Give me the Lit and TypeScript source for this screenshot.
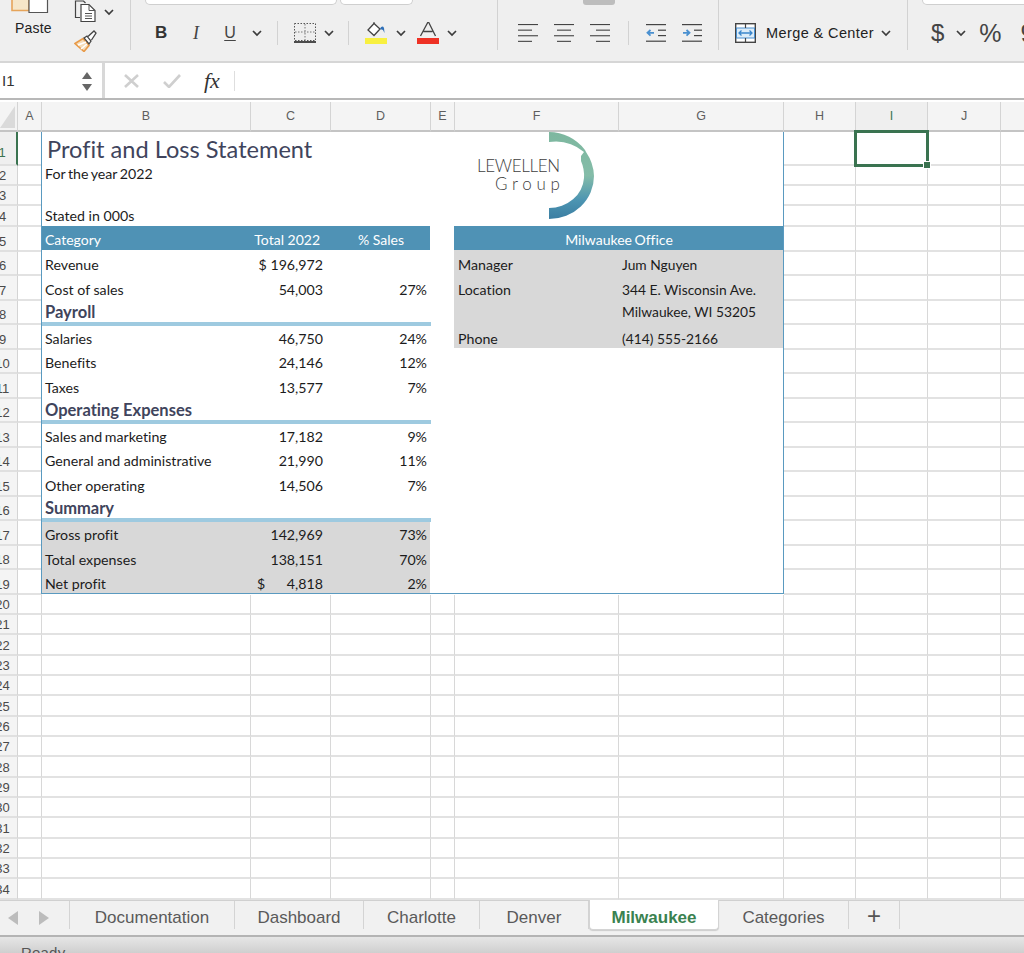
import { LitElement, html, css, svg } from "lit";
import { customElement } from "lit/decorators.js";

const COLS = ["A", "B", "C", "D", "E", "F", "G", "H", "I", "J", "K"];
const ROW_COUNT = 34;
const rowHeight = (n: number) => (n === 1 ? 34 : n === 4 ? 21 : n < 4 ? 20 : n <= 19 ? 24.53 : 20.33);

type Cell = { c: number; r: number; t: string; k?: string; span?: number };

const money = (r: number, n: string, p: string, sym = false): Cell[] => [
  { c: 2, r, t: n, k: sym ? "num acct" : "num" },
  { c: 3, r, t: p, k: "pct" },
];

const CELLS: Cell[] = [
  { c: 1, r: 1, t: "Profit and Loss Statement", k: "title", span: 3 },
  { c: 1, r: 2, t: "For the year 2022", span: 3, k: "up tight" },
  { c: 1, r: 4, t: "Stated in 000s", span: 3, k: "up1" },
  { c: 1, r: 5, t: "Category", k: "hd" },
  { c: 2, r: 5, t: "Total 2022", k: "hd total" },
  { c: 3, r: 5, t: "% Sales", k: "hd sales dcol" },
  { c: 1, r: 6, t: "Revenue" },
  { c: 2, r: 6, t: "$ 196,972", k: "num" },
  { c: 1, r: 7, t: "Cost of sales" },
  ...money(7, "54,003", "27%"),
  { c: 1, r: 8, t: "Payroll", k: "sec", span: 3 },
  { c: 1, r: 9, t: "Salaries" },
  ...money(9, "46,750", "24%"),
  { c: 1, r: 10, t: "Benefits" },
  ...money(10, "24,146", "12%"),
  { c: 1, r: 11, t: "Taxes" },
  ...money(11, "13,577", "7%"),
  { c: 1, r: 12, t: "Operating Expenses", k: "sec", span: 3 },
  { c: 1, r: 13, t: "Sales and marketing", k: "tight" },
  ...money(13, "17,182", "9%"),
  { c: 1, r: 14, t: "General and administrative" },
  ...money(14, "21,990", "11%"),
  { c: 1, r: 15, t: "Other operating" },
  ...money(15, "14,506", "7%"),
  { c: 1, r: 16, t: "Summary", k: "sec", span: 3 },
  { c: 1, r: 17, t: "Gross profit", k: "gray" },
  { c: 2, r: 17, t: "142,969", k: "gray num" },
  { c: 3, r: 17, t: "73%", k: "gray pct dcol" },
  { c: 1, r: 18, t: "Total expenses", k: "gray" },
  { c: 2, r: 18, t: "138,151", k: "gray num" },
  { c: 3, r: 18, t: "70%", k: "gray pct dcol" },
  { c: 1, r: 19, t: "Net profit", k: "gray up1" },
  { c: 2, r: 19, t: "4,818", k: "gray num acct up1" },
  { c: 3, r: 19, t: "2%", k: "gray pct dcol up1" },
  { c: 5, r: 5, t: "Milwaukee Office", k: "hd center tight", span: 2 },
  { c: 5, r: 6, t: "Manager", k: "gray side" },
  { c: 6, r: 6, t: "Jum Nguyen", k: "gray val" },
  { c: 5, r: 7, t: "Location", k: "gray side" },
  { c: 6, r: 7, t: "344 E. Wisconsin Ave.", k: "gray val" },
  { c: 5, r: 8, t: "", k: "gray side" },
  { c: 6, r: 8, t: "Milwaukee, WI 53205", k: "gray val up4" },
  { c: 5, r: 9, t: "Phone", k: "gray side" },
  { c: 6, r: 9, t: "(414) 555-2166", k: "gray val" },
];

const chev = html`<svg class="chev" viewBox="0 0 10 7"><path d="M1 1l4 4 4-4" fill="none" stroke="#3c3c3c" stroke-width="1.7"/></svg>`;
const alignIcon = (rows: [number, number][]) => html`<svg class="ic20" viewBox="0 0 20 20">${rows.map(
  ([a, b], i) => svg`<rect x=${a} y=${1 + i * 5.6} width=${b - a} height="1.1" fill="#444"/>`
)}</svg>`;
const indentIcon = (flip: boolean) => html`<svg class="ic20" viewBox="0 0 20 20">
  <rect x="0" y="1" width="20" height="1.2" fill="#444"/><rect x="0" y="17.6" width="20" height="1.2" fill="#444"/>
  <rect x="12" y="6.6" width="8" height="1.2" fill="#444"/><rect x="12" y="12" width="8" height="1.2" fill="#444"/>
  <path d=${flip ? "M1 9.8h6M4.5 7l3 2.8-3 2.8" : "M8 9.8H2M4.5 7l-3 2.8 3 2.8"} fill="none" stroke="#4a90d0" stroke-width="1.8"/>
</svg>`;

@customElement("app-root")
export class AppRoot extends LitElement {
  static styles = css`
    :host { display: block; width: 1024px; height: 953px; overflow: hidden; background: #fff; font-family: "Liberation Sans", Arial, sans-serif; color: #222; }
    .ribbon { height: 61px; background: #efefef; border-bottom: 2px solid #d6d6d6; display: flex; overflow: hidden; }
    .grp { border-right: 1px solid #d2d2d2; height: 50px; flex: none; box-sizing: border-box; position: relative; }
    .g-clip { width: 131px; display: grid; grid-template-columns: 74px 22px 16px; grid-template-rows: 28px 22px; }
    .paste { grid-row: 1 / 3; display: flex; flex-direction: column; align-items: flex-start; padding-left: 11px; }
    .paste svg { width: 38px; height: 14px; display: block; }
    .paste span { font-size: 14px; line-height: 16px; margin: 6px 0 0 4px; letter-spacing: .2px; }
    .copy { width: 22px; height: 23px; display: block; }
    .brush { width: 23px; height: 22px; display: block; margin-top: 2px; }
    .chev { width: 10px; height: 7px; display: block; flex: none; }
    .copychev { padding: 9px 0 0 8px; }
    .g-font { width: 367px; }
    .g-align { width: 221px; }
    .g-num { flex: 1; border-right: 0; }
    .tops { display: flex; height: 5px; }
    .box { background: #fff; border: 1px solid #cfcfcf; border-top: 0; border-radius: 0 0 5px 5px; height: 5px; box-sizing: border-box; flex: none; }
    .tools { display: flex; align-items: center; height: 22px; margin-top: 17px; }
    .sep { width: 1px; height: 24px; background: #d2d2d2; flex: none; }
    .b { font-weight: 700; font-size: 17px; color: #333; width: 12px; text-align: center; }
    .i { font-family: "Liberation Serif", serif; font-style: italic; font-size: 18px; color: #444; width: 12px; text-align: center; }
    .u { font-size: 16px; color: #444; text-decoration: underline; width: 12px; text-align: center; text-underline-offset: 2px; }
    .ic20 { width: 20px; height: 20px; display: block; flex: none; }
    .merge { font-size: 14.5px; letter-spacing: .4px; color: #222; white-space: nowrap; }
    .dollar { font-size: 24px; color: #444; line-height: 22px; }
    .pctb { font-size: 25px; color: #444; line-height: 22px; }
    .formula { height: 35px; display: flex; align-items: center; background: #fff; border-bottom: 2px solid #b8b8b8; }
    .name { height: 35px; box-sizing: border-box; border-right: 3px solid #d8d8d8; width: 105px; display: flex; align-items: center; justify-content: space-between; padding: 0 10px 0 2px; font-size: 15px; color: #333; flex: none; }
    .stepper { display: flex; flex-direction: column; gap: 5px; }
    .stepper i { display: block; width: 0; height: 0; border-left: 5px solid transparent; border-right: 5px solid transparent; }
    .stepper i.up { border-bottom: 7px solid #666; }
    .stepper i.dn { border-top: 7px solid #666; }
    .fbtn { display: flex; align-items: center; margin-left: 19px; gap: 24px; }
    .fbtn svg { width: 15px; height: 14px; display: block; }
    .fx { font-family: "Liberation Serif", serif; font-style: italic; font-size: 22px; color: #333; margin-left: -1px; width: 20px; }
    .fdiv { width: 1px; height: 20px; background: #dedede; margin-left: -14px; }
    .gap { height: 2px; background: #fff; }
    .sheet { position: relative; display: grid; margin-left: -12px; width: 1036px; background: #fff; font-family: Lato, sans-serif; font-variant-ligatures: none; }
    .hc { background: #f4f4f4; border-right: 1px solid #d4d4d4; border-bottom: 2px solid #c4c4c4; box-sizing: border-box; display: flex; align-items: center; justify-content: center; font: 12.5px "Liberation Sans", sans-serif; color: #5e5e5e; }
    .hc.on { background: #efefef; color: #3a7350; }
    .corner { position: relative; justify-content: flex-end; }
    .corner svg { width: 16px; height: 22px; position: absolute; left: 12px; top: 4px; }
    .rh { background: #f4f4f4; border-right: 1px solid #d4d4d4; border-bottom: 2px solid #e0e0e0; box-sizing: border-box; display: flex; align-items: flex-end; justify-content: center; font: 13px/16px "Liberation Sans", sans-serif; color: #4a4a4a; }
    .rh.on { background: #efefef; color: #3a7350; border-right: 2px solid #3a7350; padding-bottom: 3px; }
    .cell { border-right: 1px solid #d8d8d8; border-bottom: 2px solid #e2e2e2; box-sizing: border-box; background: #fff; }
    .block { position: relative; align-self: start; background: #fff; display: grid; grid-template-columns: 209px 80px 100px 24px 164px 165px; grid-template-rows: 33px 20px 20px 21px 24px 24.5px 24.5px 27px 22px 24.5px 24.5px 27px 22.5px 24px 25px 26.5px 22.5px 25px 24.5px; grid-column: 3 / 9; grid-row: 2 / 21; }
    .block::after { content: ""; position: absolute; inset: 0 0 0 -1px; border-left: 1px solid #5a9ac0; border-right: 1px solid #5a9ac0; border-bottom: 1px solid #5a9ac0; pointer-events: none; }
    .t { font-size: 14.2px; line-height: 18px; color: #1c1c1c; display: flex; align-items: flex-end; padding: 0 0 .5px 3px; white-space: nowrap; min-width: 0; }
    .title { font-size: 23.6px; line-height: 32px; color: #40445c; padding: 1px 0 0 5px; align-items: flex-start; }
    .up { padding-bottom: 2px; }
    .up1 { padding-bottom: 1.500px; }
    .up4 { padding-bottom: 5px; }
    .tight { word-spacing: -1px; }
    .hd { background: #4f92b5; color: #fff; padding-bottom: 1px; font-size: 14px; }
    .total { justify-content: flex-end; padding-right: 11px; }
    .sales { justify-content: center; padding-right: 0; }
    .center { justify-content: center; padding-left: 0; padding-right: 0; margin-left: -1px; }
    .num { justify-content: flex-end; padding-right: 8px; position: relative; }
    .pct { justify-content: flex-end; padding-right: 4px; }
    .dcol { margin-right: 1px; padding-right: 3px; }
    .sales.dcol { padding-right: 2px; }
    .acct::before { content: "$"; margin-right: auto; padding-left: 3px; }
    .sec { font-size: 16.5px; font-weight: 700; color: #40445c; border-bottom: 4px solid #9ecae0; padding-bottom: 0; line-height: 20px; }
    .gray { background: #d8d8d8; }
    .side { padding-left: 4px; margin-left: -1px; }
    .val { padding-left: 3px; font-size: 13.8px; }
    .logo { grid-column: 5 / 7; grid-row: 1 / 5; display: block; width: 329px; height: 94px; }
    .logo text { font-family: Lato, sans-serif; font-weight: 300; fill: #3e3e3e; }
    .sel { position: absolute; left: 866px; top: 28px; width: 75px; height: 37px; box-sizing: border-box; border: 3px solid #3a7350; }
    .sel i { position: absolute; right: -5px; bottom: -5px; width: 8px; height: 8px; background: #3a7350; border: 1px solid #fff; box-sizing: border-box; }
    .tabs { height: 35px; box-sizing: border-box; background: #f1f1f1; border-top: 1px solid #d0d0d0; display: flex; font-size: 17px; color: #5a5a5a; }
    .nav { width: 70px; display: flex; align-items: center; gap: 21px; padding: 6px 0 0 8px; box-sizing: border-box; flex: none; height: 28px; border-right: 1px solid #d4d4d4; }
    .nav i { width: 0; height: 0; display: block; border-top: 7px solid transparent; border-bottom: 7px solid transparent; }
    .nav i.l { border-right: 10px solid #bcbcbc; }
    .nav i.r { border-left: 10px solid #bcbcbc; }
    .tab { height: 28px; padding-top: 6px; display: flex; align-items: center; justify-content: center; border-right: 1px solid #d4d4d4; box-sizing: border-box; flex: none; }
    .tab.active { background: #fff; color: #3a8250; font-weight: 700; height: 30px; padding-top: 7px; margin-top: -1px; border: 1px solid #d4d4d4; border-top: 0; border-radius: 0 0 4px 4px; box-shadow: 0 1px 1px #ccc; }
    .plus { font-size: 24px; color: #555; padding-top: 2px; }
    .status { height: 18px; box-sizing: border-box; border-top: 2px solid #b4b4b4; background: linear-gradient(#e6e6e6, #cfcfcf); font-size: 15px; color: #555; padding: 7px 0 0 21px; overflow: hidden; line-height: 18px; letter-spacing: .2px; }
  `;

  private ribbon() {
    return html`<div class="ribbon">
      <div class="grp g-clip">
        <div class="paste">
          <svg viewBox="0 0 38 14"><path d="M1 0v10.5h17V0" fill="#f6e6c8" stroke="#e6a45a" stroke-width="1.6"/><path d="M18 0v12.5h18.5V0" fill="#fff" stroke="#555" stroke-width="1.2"/></svg>
          <span>Paste</span>
        </div>
        <svg class="copy" viewBox="0 0 22 23"><path d="M6 17.5H1.500V1h8l2 2" fill="none" stroke="#444" stroke-width="1.200"/><path d="M7 4.500h8l6 6v11H7z" fill="#fff" stroke="#444" stroke-width="1.200"/><path d="M15 5v5.500h6M11 13.500h7M11 16h7M11 18.500h7" fill="none" stroke="#555" stroke-width="1"/></svg>
        <div class="copychev">${chev}</div>
        <svg class="brush" viewBox="0 0 23 22"><path d="M1 13.500l8-5 6 7-5 6z" fill="#f6dcb8" stroke="#e89a48" stroke-width="1.600"/><path d="M4 15l8-3M7 19l6-5" stroke="#fff" stroke-width="1.500"/><path d="M10 8l3-2 4 5-2 3z" fill="#fff" stroke="#444" stroke-width="1.300"/><path d="M14 6.500l6-5.500 2 2-4.500 7" fill="#fff" stroke="#444" stroke-width="1.300"/></svg>
      </div>

      <div class="grp g-font">
        <div class="tops"><div class="box" style="margin-left:14px;width:192px"></div><div class="box" style="margin-left:3px;width:73px"></div></div>
        <div class="tools">
          <span class="b" style="margin-left:24px">B</span>
          <span class="i" style="margin-left:23px">I</span>
          <span class="u" style="margin-left:22px">U</span>
          <span style="margin-left:16px">${chev}</span>
          <div class="sep" style="margin-left:15px"></div>
          <svg class="ic20" viewBox="0 0 22 20" style="margin-left:16px;width:22px"><rect x=".5" y=".5" width="21" height="17" fill="none" stroke="#555" stroke-dasharray="1.5 1.5"/><path d="M11 1v16M1 9h20" stroke="#777" stroke-dasharray="1.5 1.5"/><path d="M0 19h22" stroke="#222" stroke-width="1.6"/></svg>
          <span style="margin-left:8px">${chev}</span>
          <div class="sep" style="margin-left:14px"></div>
          <svg viewBox="0 0 22 22" style="margin-left:16px;width:22px;height:22px;display:block;flex:none"><path d="M9 1.500l-6 6.500 6 5.500 6-6.500z" fill="#fff" stroke="#444" stroke-width="1.300"/><path d="M9 2V0" stroke="#444"/><path d="M15 7c1.500-3 3-3 4-1l.500 5-1.500-3z" fill="#2f70b8"/><rect x="0" y="16" width="22" height="6" fill="#f8f040"/></svg>
          <span style="margin-left:9px">${chev}</span>
          <svg viewBox="0 0 22 22" style="margin-left:11px;width:22px;height:22px;display:block;flex:none"><path d="M3.500 14L11 0h.5L18.500 14M6.500 9.500h9" fill="none" stroke="#444" stroke-width="1.300"/><rect x="0" y="16" width="22" height="6" fill="#ee3124"/></svg>
          <span style="margin-left:8px">${chev}</span>
        </div>
      </div>

      <div class="grp g-align">
        <div class="tops"><div style="margin-left:85px;width:32px;height:5px;background:#bdbdbd;border-radius:0 0 3px 3px"></div></div>
        <div class="tools">
          <span style="margin-left:20px">${alignIcon([[0, 20], [0, 14], [0, 20], [0, 14]])}</span>
          <span style="margin-left:16px">${alignIcon([[0, 20], [3, 17], [0, 20], [3, 17]])}</span>
          <span style="margin-left:16px">${alignIcon([[0, 20], [6, 20], [0, 20], [6, 20]])}</span>
          <div class="sep" style="margin-left:18px"></div>
          <span style="margin-left:17px">${indentIcon(false)}</span>
          <span style="margin-left:16px">${indentIcon(true)}</span>
        </div>
      </div>

      <div class="grp" style="width:189px">
        <div class="tools" style="margin-top:22px">
          <svg class="ic20" viewBox="0 0 21 20" style="margin-left:16px;width:21px"><rect x=".7" y=".7" width="19.600" height="18.600" fill="#fff" stroke="#444" stroke-width="1.400"/><rect x="1.500" y="5" width="18" height="10" fill="#dcecf8" stroke="#4a90d0" stroke-width="1"/><path d="M10.500 1v4M10.500 15v4" stroke="#444" stroke-width="1.200"/><path d="M4 10h13M6.500 7.500L4 10l2.500 2.500M14.500 7.500L17 10l-2.500 2.500" fill="none" stroke="#3a86cc" stroke-width="1.300"/></svg>
          <span class="merge" style="margin-left:10px">Merge &amp; Center</span>
          <span style="margin-left:7px">${chev}</span>
        </div>
      </div>

      <div class="grp g-num">
        <div class="tops"><div class="box" style="margin-left:14px;width:120px"></div></div>
        <div class="tools">
          <span class="dollar" style="margin-left:23px">$</span>
          <span style="margin-left:12px">${chev}</span>
          <span class="pctb" style="margin-left:13px">%</span>
          <span class="pctb" style="margin-left:19px">9</span>
        </div>
      </div>
    </div>`;
  }

  private formula() {
    return html`<div class="formula">
      <div class="name"><span>I1</span><div class="stepper"><i class="up"></i><i class="dn"></i></div></div>
      <div class="fbtn">
        <svg viewBox="0 0 15 14"><path d="M1 1l13 12M14 1L1 13" stroke="#cfcfcf" stroke-width="2.600" fill="none"/></svg>
        <svg viewBox="0 0 18 14" style="width:18px"><path d="M1 8l5 5L17 1" stroke="#cfcfcf" stroke-width="2.600" fill="none"/></svg>
        <span class="fx">fx</span>
        <div class="fdiv"></div>
      </div>
    </div>`;
  }

  private logo() {
    return html`<svg class="logo" viewBox="455 132 329 94">
      <defs><linearGradient id="lg" x1="0" y1="0" x2="0" y2="1">
        <stop offset="0" stop-color="#7db79f"/><stop offset=".5" stop-color="#84bca8"/><stop offset=".78" stop-color="#4d95b2"/><stop offset="1" stop-color="#3b7ea2"/>
      </linearGradient></defs>
      <path fill="url(#lg)" d="M549 132A46 46 0 0 1 585 150L586 152A45 45 0 0 1 594 176A45 43 0 0 1 549 219L549 208A35 32 0 0 0 584 178A36 36 0 0 0 581 161L581 156L584 152A44 44 0 0 0 549 142Z"/>
      <text x="477" y="172" font-size="17" textLength="83" lengthAdjust="spacing">LEWELLEN</text>
      <text x="495" y="190" font-size="17" textLength="65" lengthAdjust="spacing">Group</text>
    </svg>`;
  }

  private sheet() {
    const rows = Array.from({ length: ROW_COUNT }, (_, i) => i + 1);
    const tracks = rows.map((n) => `${rowHeight(n)}px`).join(" ");
    const grid = `grid-template-columns:30px 24px 209px 80px 100px 24px 164px 165px 72px 72px 73px 73px;grid-template-rows:30px ${tracks}`;
    return html`<div class="sheet" style=${grid}>
      <div class="hc corner"><svg viewBox="0 0 16 22"><path d="M15 0v22H0z" fill="#dadada"/></svg></div>
      ${COLS.map((c) => html`<div class="hc ${c === "I" ? "on" : ""}">${c}</div>`)}
      ${rows.map((r) => html`
        <div class="rh ${r === 1 ? "on" : ""}" style="grid-row:${r + 1};grid-column:1">${r}</div>
        ${COLS.map((_, ci) => (r <= 19 && ci >= 1 && ci <= 6 ? "" : html`<div class="cell" style="grid-row:${r + 1};grid-column:${ci + 2}"></div>`))}
      `)}
      <div class="block">
        ${this.logo()}
        ${CELLS.map((x) => html`<div class="t ${x.k ?? ""}" style="grid-column:${x.c}${x.span ? ` / span ${x.span}` : ""};grid-row:${x.r}">${x.t}</div>`)}
      </div>
      <div class="sel"><i></i></div>
    </div>`;
  }

  private tabs() {
    const tabs: [string, number, boolean?][] = [
      ["Documentation", 165], ["Dashboard", 129], ["Charlotte", 116], ["Denver", 109], ["Milwaukee", 130, true], ["Categories", 130],
    ];
    return html`<div class="tabs">
      <div class="nav"><i class="l"></i><i class="r"></i></div>
      ${tabs.map(([t, w, a]) => html`<div class="tab ${a ? "active" : ""}" style="width:${w}px">${t}</div>`)}
      <div class="tab plus" style="width:51px">+</div>
    </div>`;
  }

  render() {
    return html`${this.ribbon()}${this.formula()}<div class="gap"></div>${this.sheet()}${this.tabs()}<div class="status">Ready</div>`;
  }
}
